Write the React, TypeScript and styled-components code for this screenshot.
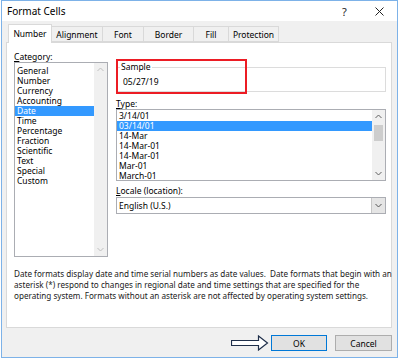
import React from "react";
import styled, { createGlobalStyle } from "styled-components";

const Global = createGlobalStyle`
  html, body { margin: 0; padding: 0; background: #ffffff; }
  body { font-family: "Noto Sans", "Open Sans", sans-serif; color: #000; }
  * { box-sizing: border-box; }
`;

const Window = styled.div`
  margin-left: 1px;
  width: 397px;
  height: 358px;
  border: 1px solid #7db2e8;
  display: flex;
  flex-direction: column;
  background: #f0f0f0;
`;

const TitleBar = styled.div`
  height: 22px;
  background: #ffffff;
  display: flex;
  align-items: center;
  justify-content: space-between;
  padding-left: 5px;
  font-size: 10px;
`;

const TitleButtons = styled.div`
  display: flex;
  align-items: center;
  height: 100%;
`;

const TitleButton = styled.div`
  width: 35px;
  height: 100%;
  display: flex;
  align-items: center;
  justify-content: center;
  font-size: 11px;
  color: #222;
`;

const Body = styled.div`
  flex: 1;
  display: flex;
  flex-direction: column;
  padding: 3px 5px 6px 4px;
`;

const TabStrip = styled.div`
  height: 18px;
  display: flex;
  align-items: flex-end;
  padding-left: 2px;
  position: relative;
  z-index: 1;
`;

const Tab = styled.div<{ $w: number; $active?: boolean }>`
  width: ${(p) => p.$w}px;
  height: ${(p) => (p.$active ? 19 : 16)}px;
  margin-bottom: ${(p) => (p.$active ? -1 : 0)}px;
  background: ${(p) => (p.$active ? "#ffffff" : "#f0f0f0")};
  border: 1px solid #d9d9d9;
  border-bottom: ${(p) => (p.$active ? "none" : "1px solid #d9d9d9")};
  margin-right: -1px;
  display: flex;
  align-items: center;
  justify-content: center;
  font-size: 8.5px;
  padding-bottom: ${(p) => (p.$active ? 1 : 0)}px;
`;

const Panel = styled.div`
  height: 286px;
  background: #ffffff;
  border: 1px solid #d9d9d9;
  padding: 8px 7px 0 7px;
  display: flex;
  flex-direction: column;
  font-size: 8.5px;
`;

const Columns = styled.div`
  display: grid;
  grid-template-columns: 94px 270px;
  column-gap: 8px;
`;

const Column = styled.div`
  display: flex;
  flex-direction: column;
`;

const Label = styled.div<{ $mt?: number }>`
  height: 11px;
  line-height: 11px;
  margin-top: ${(p) => p.$mt ?? 0}px;
  white-space: nowrap;
`;

const ListBox = styled.div<{ $h: number }>`
  height: ${(p) => p.$h}px;
  border: 1px solid #abadb3;
  display: flex;
  background: #fff;
`;

const ListItems = styled.div<{ $pt: number }>`
  flex: 1;
  display: flex;
  flex-direction: column;
  padding-top: ${(p) => p.$pt}px;
`;

const Item = styled.div<{ $sel?: boolean }>`
  height: 10px;
  line-height: 10px;
  padding-left: 2px;
  white-space: nowrap;
  background: ${(p) => (p.$sel ? "#3399ff" : "transparent")};
  color: ${(p) => (p.$sel ? "#ffffff" : "#000")};
`;

const ScrollBar = styled.div<{ $disabled?: boolean }>`
  width: 13px;
  background: #f0f0f0;
  display: flex;
  flex-direction: column;
  align-items: center;
  color: ${(p) => (p.$disabled ? "#bfbfbf" : "#606060")};
`;

const ScrollArrow = styled.div`
  height: 13px;
  width: 100%;
  display: flex;
  align-items: center;
  justify-content: center;
`;

const ScrollTrack = styled.div`
  flex: 1;
  width: 100%;
  display: flex;
  flex-direction: column;
  align-items: center;
`;

const Thumb = styled.div`
  width: 9px;
  height: 16px;
  margin-top: 2px;
  background: #cdcdcd;
`;

const SampleWrap = styled.div`
  position: relative;
  margin-top: 11px;
`;

const SampleBox = styled.fieldset`
  margin: 0;
  height: 30px;
  border: 1px solid #dcdcdc;
  padding: 0 0 0 6px;
  min-width: 0;
`;

const SampleLegend = styled.legend`
  padding: 0 1px;
  margin-left: -3px;
  font-size: 8.5px;
  line-height: 10px;
`;

const SampleValue = styled.div`
  line-height: 12px;
  margin-top: 4px;
`;

const RedMark = styled.div`
  position: absolute;
  left: 0;
  top: -3px;
  width: 131px;
  height: 35px;
  border: 2px solid #ec1c24;
  pointer-events: none;
`;

const Select = styled.div`
  margin-top: 1px;
  height: 17px;
  border: 1px solid #abadb3;
  display: flex;
  align-items: stretch;
  background: #fff;
`;

const SelectText = styled.div`
  flex: 1;
  padding-left: 2px;
  display: flex;
  align-items: center;
`;

const SelectButton = styled.div`
  width: 14px;
  background: #e5e5e5;
  border-left: 1px solid #c7c7c7;
  display: flex;
  align-items: center;
  justify-content: center;
  color: #555;
`;

const Description = styled.div`
  margin-top: 11px;
  line-height: 11px;
  font-size: 8.15px;
  white-space: nowrap;
  color: #1a1a1a;
`;

const ButtonRow = styled.div`
  margin-top: 7px;
  display: flex;
  justify-content: flex-end;
  align-items: center;
  gap: 8px;
`;

const Button = styled.button<{ $focus?: boolean }>`
  width: ${(p) => (p.$focus ? 56 : 57)}px;
  height: 16px;
  padding: 0;
  font-family: inherit;
  font-size: 8.5px;
  color: #000;
  background: #e1e1e1;
  border: 1px solid ${(p) => (p.$focus ? "#0078d7" : "#adadad")};
`;

const ArrowMark = styled.svg`
  display: block;
  margin-right: -6px;
`;

const Chevron = ({ up }: { up?: boolean }) => (
  <svg width="7" height="5" viewBox="0 0 7 5">
    <polyline
      points={up ? "0.5,4 3.5,1 6.5,4" : "0.5,1 3.5,4 6.5,1"}
      fill="none"
      stroke="currentColor"
      strokeWidth="1"
    />
  </svg>
);

const categories = [
  "General",
  "Number",
  "Currency",
  "Accounting",
  "Date",
  "Time",
  "Percentage",
  "Fraction",
  "Scientific",
  "Text",
  "Special",
  "Custom",
];

const types = ["3/14/01", "03/14/01", "14-Mar", "14-Mar-01", "14-Mar-01", "Mar-01", "March-01"];

const tabs: { name: string; w: number }[] = [
  { name: "Number", w: 44 },
  { name: "Alignment", w: 52 },
  { name: "Font", w: 42 },
  { name: "Border", w: 51 },
  { name: "Fill", w: 36 },
  { name: "Protection", w: 51 },
];

export default function App() {
  return (
    <>
      <Global />
      <Window>
        <TitleBar>
          <span>Format Cells</span>
          <TitleButtons>
            <TitleButton>?</TitleButton>
            <TitleButton>
              <svg width="9" height="9" viewBox="0 0 9 9">
                <path d="M0.5 0.5 L8.5 8.5 M8.5 0.5 L0.5 8.5" stroke="#222" strokeWidth="1" />
              </svg>
            </TitleButton>
          </TitleButtons>
        </TitleBar>
        <Body>
          <TabStrip>
            {tabs.map((t, i) => (
              <Tab key={t.name} $w={t.w} $active={i === 0}>
                {t.name}
              </Tab>
            ))}
          </TabStrip>
          <Panel>
            <Columns>
              <Column>
                <Label>
                  <u>C</u>ategory:
                </Label>
                <ListBox $h={195}>
                  <ListItems $pt={3}>
                    {categories.map((c) => (
                      <Item key={c} $sel={c === "Date"}>
                        {c}
                      </Item>
                    ))}
                  </ListItems>
                  <ScrollBar $disabled>
                    <ScrollArrow>
                      <Chevron up />
                    </ScrollArrow>
                    <ScrollTrack />
                    <ScrollArrow>
                      <Chevron />
                    </ScrollArrow>
                  </ScrollBar>
                </ListBox>
              </Column>
              <Column>
                <SampleWrap>
                  <SampleBox>
                    <SampleLegend>Sample</SampleLegend>
                    <SampleValue>05/27/19</SampleValue>
                  </SampleBox>
                  <RedMark />
                </SampleWrap>
                <Label $mt={6}>
                  <u>T</u>ype:
                </Label>
                <ListBox $h={72}>
                  <ListItems $pt={1}>
                    {types.map((t, i) => (
                      <Item key={i} $sel={i === 1}>
                        {t}
                      </Item>
                    ))}
                  </ListItems>
                  <ScrollBar>
                    <ScrollArrow>
                      <Chevron up />
                    </ScrollArrow>
                    <ScrollTrack>
                      <Thumb />
                    </ScrollTrack>
                    <ScrollArrow>
                      <Chevron />
                    </ScrollArrow>
                  </ScrollBar>
                </ListBox>
                <Label $mt={4}>
                  <u>L</u>ocale (location):
                </Label>
                <Select>
                  <SelectText>English (U.S.)</SelectText>
                  <SelectButton>
                    <Chevron />
                  </SelectButton>
                </Select>
              </Column>
            </Columns>
            <Description>
              Date formats display date and time serial numbers as date values.&nbsp; Date formats that begin with an
              <br />
              asterisk (*) respond to changes in regional date and time settings that are specified for the
              <br />
              operating system. Formats without an asterisk are not affected by operating system settings.
            </Description>
          </Panel>
          <ButtonRow>
            <ArrowMark width="38" height="16" viewBox="0 0 38 16">
              <path
                d="M0.5 5.5 H27.5 V1 L36.5 8 L27.5 15 V10.5 H0.5 Z"
                fill="#ffffff"
                stroke="#1f2f4a"
                strokeWidth="1.2"
                strokeLinejoin="miter"
              />
            </ArrowMark>
            <Button $focus>OK</Button>
            <Button>Cancel</Button>
          </ButtonRow>
        </Body>
      </Window>
    </>
  );
}
